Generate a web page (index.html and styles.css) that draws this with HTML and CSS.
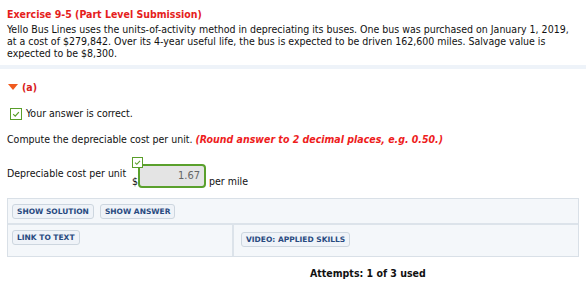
FILE: index.html
```html
<!DOCTYPE html>
<html>
<head>
<meta charset="utf-8">
<link rel="stylesheet" href="styles.css">
</head>
<body>
<div class="header">
  <div class="title">Exercise 9-5 (Part Level Submission)</div>
  <p class="intro">Yello Bus Lines uses the units-of-activity method in depreciating its buses. One bus was purchased on January 1, 2019, at a cost of $279,842. Over its 4-year useful life, the bus is expected to be driven 162,600 miles. Salvage value is expected to be $8,300.</p>
</div>
<div class="band"></div>
<div class="part">
  <div class="part-head"><span class="tri"></span><span class="part-label">(a)</span></div>
  <div class="correct">
    <span class="check big"><svg viewBox="0 0 10 10" width="8" height="8"><path d="M1.5 5.2 L4 7.6 L8.6 2.6" fill="none" stroke="#5a9e2a" stroke-width="1.5"/></svg></span>
    <span>Your answer is correct.</span>
  </div>
  <div class="question">Compute the depreciable cost per unit. <em class="hint">(Round answer to 2 decimal places, e.g. 0.50.)</em></div>
  <div class="answer-row">
    <span class="answer-label">Depreciable cost per unit</span>
    <span class="dollar">$</span>
    <span class="field">
      <span class="check small"><svg viewBox="0 0 10 10" width="7" height="7"><path d="M1.5 5.2 L4 7.6 L8.6 2.6" fill="none" stroke="#5a9e2a" stroke-width="1.5"/></svg></span>
      <span class="input">1.67</span>
    </span>
    <span class="unit">per mile</span>
  </div>
  <div class="panel">
    <div class="panel-top">
      <span class="btn">SHOW SOLUTION</span>
      <span class="btn">SHOW ANSWER</span>
    </div>
    <div class="panel-bottom">
      <div class="cell left"><span class="btn">LINK TO TEXT</span></div>
      <div class="cell right"><span class="btn">VIDEO: APPLIED SKILLS</span></div>
    </div>
  </div>
  <div class="attempts">Attempts: 1 of 3 used</div>
</div>
</body>
</html>
```
FILE: styles.css
```css
html, body {
  margin: 0;
  padding: 0;
  background: #ffffff;
}
body {
  font-family: "DejaVu Sans Condensed", "DejaVu Sans", Verdana, sans-serif;
  font-size: 10.5px;
  line-height: 13px;
  color: #111111;
  width: 586px;
}
.header {
  padding: 8px 7px 6px 7px;
}
.title {
  color: #e5201b;
  font-weight: bold;
  font-size: 10.5px;
  line-height: 13px;
}
.intro {
  margin: 2px 0 0 0;
  line-height: 12px;
  width: 572px;
}
.band {
  height: 4px;
  background: #eef3f9;
}
.part {
  padding: 0 7px;
}
.part-head {
  display: flex;
  align-items: center;
  gap: 4px;
  margin-top: 12px;
  height: 12px;
}
.tri {
  width: 0;
  height: 0;
  border-left: 5px solid transparent;
  border-right: 5px solid transparent;
  border-top: 6px solid #f05a1e;
  margin-left: 1px;
}
.part-label {
  color: #d92020;
  font-weight: bold;
}
.correct {
  display: flex;
  align-items: center;
  gap: 4px;
  margin-top: 14px;
  margin-left: 3px;
  height: 13px;
}
.check {
  display: inline-flex;
  align-items: center;
  justify-content: center;
  box-sizing: border-box;
  border: 1.5px solid #5a9e2a;
  background: #ffffff;
}
.check.big {
  width: 12px;
  height: 12px;
}
.check.small {
  width: 11px;
  height: 11px;
  border-width: 1px;
  position: absolute;
  left: -6px;
  top: -7px;
}
.question {
  margin-top: 13px;
}
.hint {
  color: #ee1c1c;
  font-weight: bold;
  font-style: italic;
}
.answer-row {
  display: flex;
  align-items: flex-end;
  margin-top: 18px;
  height: 24px;
}
.answer-label {
  align-self: flex-start;
  margin-top: 3px;
  width: 125px;
  white-space: nowrap;
}
.field {
  position: relative;
}
.input {
  display: block;
  box-sizing: border-box;
  width: 68px;
  height: 24px;
  border: 2px solid #5aa02c;
  border-radius: 4px;
  background: #e4e4e4;
  color: #666666;
  text-align: right;
  padding: 3px 4px 0 0;
  font-size: 11px;
}
.unit {
  margin-left: 3px;
}
.panel {
  margin-top: 10px;
  width: 572px;
  background: #f4f7fa;
  border: 1px solid #d9e0e7;
  box-sizing: border-box;
}
.panel-top {
  display: flex;
  gap: 6px;
  padding: 5px 4px 4px 4px;
  border-bottom: 2px solid #dce3ea;
}
.panel-bottom {
  display: flex;
  height: 31px;
}
.cell {
  box-sizing: border-box;
}
.cell.left {
  width: 226px;
  padding: 5px 4px;
  border-right: 2px solid #dce3ea;
}
.cell.right {
  padding: 7px 7px;
}
.btn {
  display: inline-block;
  font-family: "DejaVu Sans", Verdana, sans-serif;
  font-size: 7.5px;
  font-weight: bold;
  color: #284a80;
  background: #eff3f8;
  border: 1px solid #cdd6df;
  border-radius: 3px;
  padding: 2px 4px 2px 4px;
  line-height: 9px;
}
.attempts {
  margin-top: 10px;
  padding-left: 303px;
  font-weight: bold;
  font-size: 10.5px;
}
```
